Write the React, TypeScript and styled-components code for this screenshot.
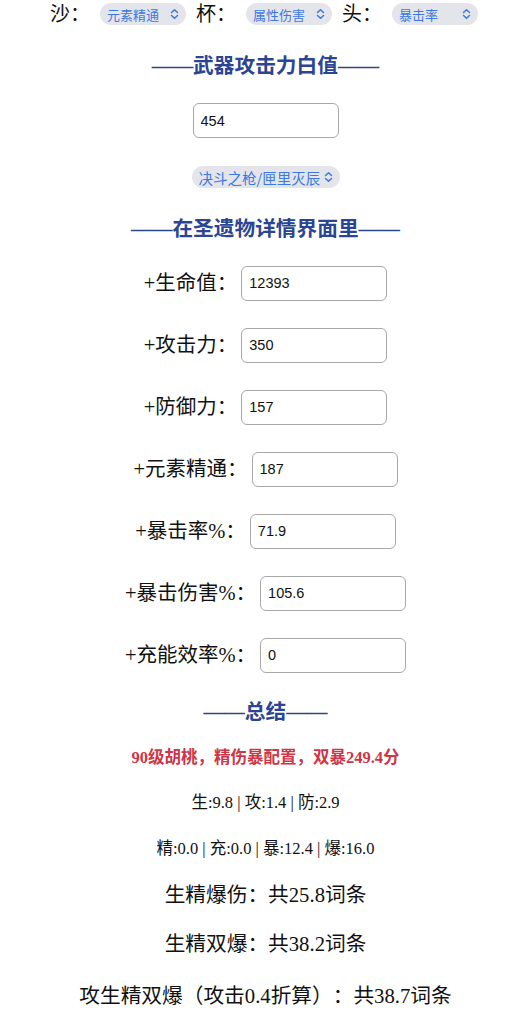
import React from "react";
import styled, { createGlobalStyle } from "styled-components";

const Global = createGlobalStyle`
  html, body { margin: 0; padding: 0; background: #ffffff; }
  body {
    font-family: "Liberation Serif", "Noto Sans CJK SC", serif;
    color: #111111;
    text-spacing-trim: space-all;
  }
`;

const Page = styled.div`
  width: 531px;
  display: flex;
  flex-direction: column;
  align-items: center;
  padding-bottom: 20px;
`;

const TopRow = styled.div`
  height: 28px;
  display: flex;
  align-items: center;
  justify-content: center;
  gap: 10px;
  margin-left: -3px;
`;

const TopLabel = styled.span`
  font-size: 20px;
  line-height: 28px;
  width: 40px;
  white-space: nowrap;
`;

const PillWrap = styled.div<{ $w: number; $fs: number; $h: number }>`
  position: relative;
  display: inline-flex;
  align-items: center;
  width: ${(p) => p.$w}px;
  height: ${(p) => p.$h}px;
  border-radius: ${(p) => p.$h / 2}px;
  background: #e4e5ea;
  box-sizing: border-box;
  select {
    appearance: none;
    -webkit-appearance: none;
    border: none;
    background: transparent;
    width: 100%;
    height: 100%;
    padding: 0 20px 0 7px;
    font-family: "Noto Sans CJK SC", "Liberation Sans", sans-serif;
    font-size: ${(p) => p.$fs}px;
    color: #3c78e2;
    outline: none;
  }
  svg {
    position: absolute;
    right: 7px;
    top: 50%;
    transform: translateY(-50%);
    pointer-events: none;
  }
`;

const Chevrons = () => (
  <svg width="9" height="11" viewBox="0 0 9 11">
    <path
      d="M1.5 4 L4.5 1.2 L7.5 4 M1.5 7 L4.5 9.8 L7.5 7"
      fill="none"
      stroke="#3c78e2"
      strokeWidth="1.5"
      strokeLinecap="round"
      strokeLinejoin="round"
    />
  </svg>
);

const Pill: React.FC<{ value: string; w: number; fs: number; h: number }> = ({ value, w, fs, h }) => (
  <PillWrap $w={w} $fs={fs} $h={h}>
    <select defaultValue={value}>
      <option value={value}>{value}</option>
    </select>
    <Chevrons />
  </PillWrap>
);

const Heading = styled.h3<{ $mt: number }>`
  margin: ${(p) => p.$mt}px 0 0;
  font-family: "Liberation Serif", "Noto Sans CJK SC", serif;
  font-size: 20.7px;
  line-height: 28px;
  font-weight: 700;
  color: #2b4592;
  white-space: nowrap;
`;

const Field = styled.input<{ $mt?: number }>`
  margin-top: ${(p) => p.$mt ?? 0}px;
  width: 146px;
  height: 35px;
  box-sizing: border-box;
  border: 1px solid #a8a8a8;
  border-radius: 6px;
  padding: 0 7px;
  font-family: "Liberation Sans", Arial, sans-serif;
  font-size: 14.5px;
  color: #111;
  background: #fff;
  outline: none;
`;

const Spacer = styled.div<{ $h: number }>`
  height: ${(p) => p.$h}px;
`;

const Rows = styled.div`
  margin-top: 22.5px;
  display: flex;
  flex-direction: column;
  align-items: center;
  gap: 27px;
`;

const Row = styled.div`
  display: flex;
  align-items: center;
  justify-content: center;
  gap: 4px;
`;

const RowLabel = styled.label`
  font-size: 20.5px;
  line-height: 35px;
  white-space: nowrap;
`;

const Verdict = styled.div`
  margin-top: 20px;
  font-size: 16.5px;
  line-height: 24px;
  font-weight: 700;
  color: #cf3447;
  white-space: nowrap;
`;

const Stat = styled.div<{ $mt: number }>`
  margin-top: ${(p) => p.$mt}px;
  font-size: 16.5px;
  line-height: 24px;
  white-space: nowrap;
`;

const Total = styled.div<{ $mt: number }>`
  margin-top: ${(p) => p.$mt}px;
  font-size: 20.7px;
  line-height: 28px;
  white-space: nowrap;
`;

const rows = [
  ["+生命值：", "12393"],
  ["+攻击力：", "350"],
  ["+防御力：", "157"],
  ["+元素精通：", "187"],
  ["+暴击率%：", "71.9"],
  ["+暴击伤害%：", "105.6"],
  ["+充能效率%：", "0"],
];

export default function App() {
  return (
    <Page>
      <Global />
      <TopRow>
        <TopLabel>沙：</TopLabel>
        <Pill value="元素精通" w={86} fs={13} h={22} />
        <TopLabel>杯：</TopLabel>
        <Pill value="属性伤害" w={86} fs={13} h={22} />
        <TopLabel>头：</TopLabel>
        <Pill value="暴击率" w={86} fs={13} h={22} />
      </TopRow>

      <Heading $mt={24}>——武器攻击力白值——</Heading>
      <Field $mt={23} defaultValue="454" />
      <Spacer $h={28} />
      <Pill value="决斗之枪/匣里灭辰" w={148} fs={14.5} h={22} />
      <Heading $mt={27}>——在圣遗物详情界面里——</Heading>

      <Rows>
        {rows.map(([label, value]) => (
          <Row key={label}>
            <RowLabel>{label}</RowLabel>
            <Field defaultValue={value} />
          </Row>
        ))}
      </Rows>

      <Heading $mt={25.5}>——总结——</Heading>
      <Verdict>90级胡桃，精伤暴配置，双暴249.4分</Verdict>
      <Stat $mt={21}>生:9.8 | 攻:1.4 | 防:2.9</Stat>
      <Stat $mt={22}>精:0.0 | 充:0.0 | 暴:12.4 | 爆:16.0</Stat>
      <Total $mt={20}>生精爆伤：共25.8词条</Total>
      <Total $mt={21}>生精双爆：共38.2词条</Total>
      <Total $mt={24}>攻生精双爆（攻击0.4折算）：共38.7词条</Total>
    </Page>
  );
}
